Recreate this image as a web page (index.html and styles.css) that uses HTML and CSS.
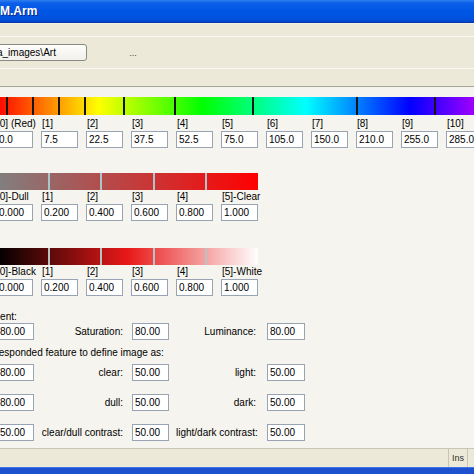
FILE: index.html
```html
<!DOCTYPE html>
<html lang="en">
  <head>
    <meta charset="UTF-8" />
    <title>M.Arm</title>
    <link rel="stylesheet" href="styles.css">
  </head>
  <body>
    <div class="window">
      <!-- title bar -->
      <div class="titlebar"><span class="title">M.Arm</span></div>

      <!-- rebar bands -->
      <div class="menubar"></div>
      <div class="pathbar">
        <button class="path-btn">a_images\Art</button>
        <button class="browse-btn">...</button>
      </div>
      <div class="toolbar-empty"></div>

      <main class="content">
        <!-- hue scale -->
        <section class="scale scale-hue">
          <div class="bar bar-hue">
            <span class="seg" style="flex-basis: 2.0833%"></span>
            <span class="seg" style="flex-basis: 4.1667%"></span>
            <span class="seg" style="flex-basis: 4.1667%"></span>
            <span class="seg" style="flex-basis: 4.1667%"></span>
            <span class="seg" style="flex-basis: 6.25%"></span>
            <span class="seg" style="flex-basis: 8.3333%"></span>
            <span class="seg" style="flex-basis: 12.5%"></span>
            <span class="seg" style="flex-basis: 16.6667%"></span>
            <span class="seg" style="flex-basis: 12.5%"></span>
            <span class="seg" style="flex-basis: 8.3333%"></span>
            <span class="seg seg-last" style="flex-basis: 20.8333%"></span>
          </div>
          <div class="grid labels">
            <span>[0] (Red)</span><span>[1]</span><span>[2]</span><span>[3]</span>
            <span>[4]</span><span>[5]</span><span>[6]</span><span>[7]</span>
            <span>[8]</span><span>[9]</span><span>[10]</span>
          </div>
          <div class="grid values">
            <input value="0.0"><input value="7.5"><input value="22.5"><input value="37.5">
            <input value="52.5"><input value="75.0"><input value="105.0"><input value="150.0">
            <input value="210.0"><input value="255.0"><input value="285.0">
          </div>
        </section>

        <!-- dull / clear scale -->
        <section class="scale scale-dull">
          <div class="bar bar-five bar-dull">
            <span class="cell"></span><span class="cell"></span><span class="cell"></span>
            <span class="cell"></span><span class="cell"></span>
          </div>
          <div class="grid labels">
            <span>[0]-Dull</span><span>[1]</span><span>[2]</span><span>[3]</span>
            <span>[4]</span><span>[5]-Clear</span>
          </div>
          <div class="grid values">
            <input value="0.000"><input value="0.200"><input value="0.400">
            <input value="0.600"><input value="0.800"><input value="1.000">
          </div>
        </section>

        <!-- black / white scale -->
        <section class="scale scale-light">
          <div class="bar bar-five bar-light">
            <span class="cell"></span><span class="cell"></span><span class="cell"></span>
            <span class="cell"></span><span class="cell"></span>
          </div>
          <div class="grid labels">
            <span>[0]-Black</span><span>[1]</span><span>[2]</span><span>[3]</span>
            <span>[4]</span><span>[5]-White</span>
          </div>
          <div class="grid values">
            <input value="0.000"><input value="0.200"><input value="0.400">
            <input value="0.600"><input value="0.800"><input value="1.000">
          </div>
        </section>

        <!-- adjustment -->
        <section class="adjust">
          <div class="note note-adjust">Adjustment:</div>
          <div class="grid form-row">
            <input value="80.00">
            <label class="field-label">Saturation:</label>
            <input value="80.00">
            <label class="field-label field-label-r">Luminance:</label>
            <input value="80.00">
          </div>

          <div class="note note-use">Use corresponded feature to define image as:</div>
          <div class="form-rows">
            <div class="grid form-row">
              <input value="80.00">
              <label class="field-label">clear:</label>
              <input value="50.00">
              <label class="field-label field-label-r">light:</label>
              <input value="50.00">
            </div>
            <div class="grid form-row">
              <input value="80.00">
              <label class="field-label">dull:</label>
              <input value="50.00">
              <label class="field-label field-label-r">dark:</label>
              <input value="50.00">
            </div>
            <div class="grid form-row">
              <input value="50.00">
              <label class="field-label">clear/dull contrast:</label>
              <input value="50.00">
              <label class="field-label field-label-r">light/dark contrast:</label>
              <input value="50.00">
            </div>
          </div>
        </section>
      </main>

      <!-- status bar -->
      <div class="statusbar">
        <div class="status-main"></div>
        <div class="status-ins">Ins</div>
        <div class="status-end"></div>
      </div>
    </div>

    <div class="taskbar"></div>
  </body>
</html>
```

FILE: styles.css
```css
body {
  margin: 0;
  padding: 0;
  height: 474px;
  overflow: hidden;
  background-color: #f5f4ee;
  font-family: "Liberation Sans", Arial, sans-serif;
  font-size: 10px;
  color: #000;
}

/* window is cropped on the left and right */
.window {
  width: 530px;
  margin-left: -12px;
  overflow: hidden;
}

/* title bar */
.titlebar {
  height: 22px;
  border-bottom: 1px solid #0836a8;
  background: linear-gradient(#2f7ff0 0, #0b5fe8 3px, #0056e4 50%, #0052de 85%, #0046c8 100%);
  padding-left: 12px;
  display: flex;
  align-items: center;
}

.title {
  color: #fff;
  font-weight: bold;
  font-size: 12px;
  text-shadow: 1px 1px 0 #0b2a8c;
}

/* rebar bands */
.menubar {
  height: 13px;
  background-color: #ece9d8;
  border-top: 1px solid #f3f1e6;
  border-bottom: 1px solid #fbfaf5;
  box-sizing: border-box;
  height: 14px;
}

.pathbar {
  height: 31px;
  background-color: #ece9d8;
  border-bottom: 1px solid #fbfaf5;
  display: flex;
  align-items: center;
}

.path-btn {
  width: 99px;
  height: 17px;
  box-sizing: border-box;
  border: 1px solid #8a8a85;
  border-radius: 3px;
  background: linear-gradient(#fdfdfb, #f1f0ea);
  font-family: inherit;
  font-size: 10px;
  text-align: left;
  padding: 0 0 0 8px;
}

.browse-btn {
  margin-left: 34px;
  width: 24px;
  height: 17px;
  border: none;
  background: none;
  font-family: inherit;
  font-size: 9px;
  color: #444;
  padding: 0;
}

.toolbar-empty {
  height: 17px;
  background-color: #ece9d8;
  border-bottom: 1px solid #a7a596;
}

/* main area */
.content {
  background-color: #f5f4ee;
  padding: 10px 0 7px 8px;
}

.grid {
  display: grid;
  grid-template-columns: repeat(11, 37px);
  column-gap: 8px;
}

.labels span {
  padding-left: 1px;
  height: 14px;
  line-height: 14px;
  white-space: nowrap;
}

.values input,
.form-row input {
  width: 37px;
  height: 17px;
  box-sizing: border-box;
  border: 1px solid #98a4b4;
  background-color: #fff;
  font-family: inherit;
  font-size: 10px;
  padding: 0 2px;
  margin: 0;
  color: #000;
}

/* gradient bars */
.bar {
  display: flex;
}

.bar-hue {
  width: 622px;
  height: 18px;
  margin-left: -1px;
  margin-bottom: 2px;
  background: linear-gradient(to right, #ff0000, #ffff00, #00ff00, #00ffff, #0000ff, #ff00ff, #ff0000);
}

.bar-hue .seg {
  box-sizing: border-box;
  border-right: 2px solid #141414;
}

.bar-hue .seg-last {
  border-right: none;
}

.bar-five {
  width: 261px;
  height: 17px;
  margin-left: 1px;
}

.bar-five .cell {
  flex: 1;
}

.bar-five .cell + .cell {
  border-left: 2px solid #a9c6ca;
}

.bar-dull {
  background: linear-gradient(to right, #808080, #ff0000);
}

.bar-light {
  background: linear-gradient(to right, #000000, #e81818 50%, #ffffff);
}

.bar-light .cell + .cell {
  border-left-color: #b3c3c6;
}

.scale-dull {
  margin-top: 25px;
}

.scale-light {
  margin-top: 27px;
}

/* adjustment block */
.adjust {
  margin-top: 15px;
}

.note {
  line-height: 12px;
  white-space: nowrap;
}

.note-adjust {
  margin-left: -32px;
}

.note-use {
  margin-top: 6px;
  margin-left: -35px;
  line-height: 14px;
}

.form-rows {
  margin-top: 4px;
  display: flex;
  flex-direction: column;
  gap: 13px;
}

.form-row {
  align-items: center;
}

.form-row input {
  margin-left: 1px;
}

.field-label {
  grid-column: span 2;
  text-align: right;
  padding-right: 0;
  white-space: nowrap;
}

.field-label-r {
  padding-right: 2px;
}

.form-row input:last-child {
  width: 38px;
}

/* status bar */
.statusbar {
  display: flex;
  height: 18px;
  border-top: 1px solid #c9c6b6;
  background-color: #ece9d8;
}

.status-main {
  flex: 1;
}

.status-ins {
  width: 15px;
  border-left: 1px solid #c8c5b4;
  border-right: 1px solid #c8c5b4;
  padding-left: 3px;
  line-height: 18px;
  font-size: 9px;
  color: #333;
}

.status-end {
  width: 50px;
}

.taskbar {
  height: 10px;
  border-top: 1px solid #3d78e6;
  background-color: #1d50cf;
}
```
